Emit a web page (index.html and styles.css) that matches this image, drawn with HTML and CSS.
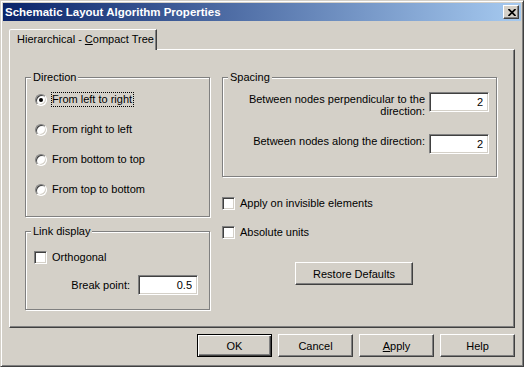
FILE: index.html
```html
<!DOCTYPE html>
<html lang="en">
<head>
  <meta charset="UTF-8">
  <meta name="viewport" content="width=device-width, initial-scale=1.0">
  <title>Schematic Layout Algorithm Properties</title>
  <link rel="stylesheet" href="styles.css">
</head>
<body>
  <div class="window">

    <!-- Title bar -->
    <div class="titlebar">
      <span class="title">Schematic Layout Algorithm Properties</span>
      <button class="close" aria-label="Close">
        <svg width="8" height="7" viewBox="0 0 8 7">
          <path d="M0.5 0 L7.5 7 M7.5 0 L0.5 7" stroke="#000" stroke-width="1.7" fill="none"/>
        </svg>
      </button>
    </div>

    <div class="dialog">
      <div class="tabs">
        <div class="tab">Hierarchical - <u>C</u>ompact Tree</div>
      </div>

      <div class="panel">
        <!-- Left column -->
        <div class="col col-left">
          <div class="group direction">
            <div class="group-title">Direction</div>
            <div class="radio-list">
              <div class="option"><span class="radio checked"></span><span class="caption focus">From left to right</span></div>
              <div class="option"><span class="radio"></span><span class="caption">From right to left</span></div>
              <div class="option"><span class="radio"></span><span class="caption">From bottom to top</span></div>
              <div class="option"><span class="radio"></span><span class="caption">From top to bottom</span></div>
            </div>
          </div>

          <div class="group link-display">
            <div class="group-title">Link display</div>
            <div class="check-row orth"><span class="check"></span>Orthogonal</div>
            <div class="field-row">
              <label for="breakpoint">Break point:</label>
              <input class="field" id="breakpoint" type="text" value="0.5">
            </div>
          </div>
        </div>

        <!-- Right column -->
        <div class="col col-right">
          <div class="group spacing">
            <div class="group-title">Spacing</div>
            <div class="spacing-row first">
              <label for="perp">Between nodes perpendicular to the<br>direction:</label>
              <input class="field" id="perp" type="text" value="2">
            </div>
            <div class="spacing-row second">
              <label for="along">Between nodes along the direction:</label>
              <input class="field" id="along" type="text" value="2">
            </div>
          </div>

          <div class="check-row invisible"><span class="check"></span>Apply on invisible elements</div>
          <div class="check-row absolute"><span class="check"></span>Absolute units</div>

          <button class="btn restore">Restore Defaults</button>
        </div>
      </div>

      <div class="buttons">
        <button class="btn default">OK</button>
        <button class="btn">Cancel</button>
        <button class="btn"><u>A</u>pply</button>
        <button class="btn">Help</button>
      </div>
    </div>

  </div>
</body>
</html>
```

FILE: styles.css
```css
* {
  margin: 0;
  padding: 0;
  box-sizing: border-box;
}

body {
  font-family: "Liberation Sans", Arial, sans-serif;
  font-size: 11px;
  color: #000;
  background: #d4d0c8;
}

.window {
  width: 524px;
  height: 367px;
  display: flex;
  flex-direction: column;
  padding: 2px;
  background: #d4d0c8;
  border: 1px solid;
  border-color: #d4d0c8 #404040 #404040 #d4d0c8;
  box-shadow: inset 1px 1px #fff, inset -1px -1px #808080;
}

/* title bar */
.titlebar {
  height: 18px;
  display: flex;
  align-items: center;
  justify-content: space-between;
  padding: 0 2px;
  background: linear-gradient(to right, #0a246a, #a6caf0);
  color: #fff;
  font-weight: bold;
  font-size: 11.5px;
}

.close {
  width: 16px;
  height: 14px;
  display: flex;
  align-items: center;
  justify-content: center;
  padding-left: 1px;
  background: #d4d0c8;
  border: 1px solid;
  border-color: #fff #404040 #404040 #fff;
  box-shadow: inset -1px -1px #808080;
}

/* dialog body */
.dialog {
  flex: 1;
  display: flex;
  flex-direction: column;
  padding: 8px 6px 0;
}

.tabs {
  display: flex;
}

.tab {
  position: relative;
  z-index: 1;
  width: 148px;
  height: 21px;
  margin-bottom: -1px;
  padding: 3px 0 0 7px;
  line-height: 13px;
  background: #d4d0c8;
  border: 1px solid;
  border-bottom: 0;
  border-color: #fff #404040 transparent #fff;
  border-top-left-radius: 2px;
  box-shadow: inset -1px 0 #808080;
}

.panel {
  width: 506px;
  height: 279px;
  display: flex;
  gap: 12px;
  padding: 27px 0 0 15px;
  border: 1px solid;
  border-color: #fff #404040 #404040 #fff;
  box-shadow: inset -1px -1px #808080;
}

.col {
  display: flex;
  flex-direction: column;
}

.col-left {
  width: 185px;
  gap: 14px;
}

.col-right {
  width: 275px;
}

/* group boxes */
.group {
  border: 1px solid #808080;
  box-shadow: inset 1px 1px #fff, 1px 1px #fff;
}

.group-title {
  display: table;
  margin: -7px 0 0 5px;
  padding: 0 2px;
  line-height: 13px;
  background: #d4d0c8;
}

.direction {
  height: 140px;
}

.link-display {
  height: 79px;
}

.spacing {
  height: 100px;
}

.radio-list {
  display: flex;
  flex-direction: column;
  gap: 15px;
  margin: 8px 0 0 9px;
}

.option {
  display: flex;
  align-items: center;
  height: 15px;
}

.caption {
  line-height: 13px;
  padding-right: 1px;
  border: 1px solid transparent;
}

.caption.focus {
  border: 1px dotted #000;
}

.radio {
  flex: none;
  width: 12px;
  height: 12px;
  margin-right: 4px;
  display: flex;
  align-items: center;
  justify-content: center;
  border-radius: 50%;
  background: #fff;
  border: 1px solid;
  border-color: #808080 #fff #fff #808080;
  box-shadow: inset 1px 1px #404040, inset -1px -1px #d4d0c8;
}

.radio.checked::after {
  content: "";
  width: 4px;
  height: 4px;
  border-radius: 50%;
  background: #000;
}

.check-row {
  display: flex;
  align-items: center;
  height: 13px;
  line-height: 13px;
}

.check {
  flex: none;
  width: 13px;
  height: 13px;
  margin-right: 5px;
  background: #fff;
  border: 1px solid;
  border-color: #808080 #fff #fff #808080;
  box-shadow: inset 1px 1px #404040, inset -1px -1px #d4d0c8;
}

.orth {
  margin: 13px 0 0 8px;
}

.field-row {
  display: flex;
  align-items: center;
  justify-content: flex-end;
  gap: 8px;
  margin-top: 11px;
  padding-right: 11px;
}

.field {
  width: 60px;
  height: 20px;
  padding: 0 5px;
  font: inherit;
  text-align: right;
  background: #fff;
  border: 1px solid;
  border-color: #808080 #fff #fff #808080;
  box-shadow: inset 1px 1px #404040, inset -1px -1px #d4d0c8;
  outline: none;
}

.spacing-row {
  display: flex;
  align-items: flex-start;
  justify-content: flex-end;
  gap: 4px;
  padding-right: 7px;
}

.spacing-row label {
  margin-top: 1px;
  line-height: 12px;
  text-align: right;
  white-space: nowrap;
}

.spacing-row.first {
  margin-top: 8px;
}

.spacing-row.second {
  margin-top: 17px;
}

.invisible {
  margin-top: 20px;
}

.absolute {
  margin-top: 16px;
}

/* buttons */
.btn {
  width: 75px;
  height: 23px;
  font: inherit;
  color: #000;
  background: #d4d0c8;
  border: 1px solid;
  border-color: #fff #404040 #404040 #fff;
  box-shadow: inset -1px -1px #808080;
}

.btn.default {
  border-color: #000;
  box-shadow: inset 1px 1px #fff, inset -1px -1px #404040, inset -2px -2px #808080;
}

.restore {
  width: 118px;
  margin: 23px 0 0 73px;
}

.buttons {
  display: flex;
  justify-content: flex-end;
  gap: 6px;
  margin-top: 6px;
}
```
